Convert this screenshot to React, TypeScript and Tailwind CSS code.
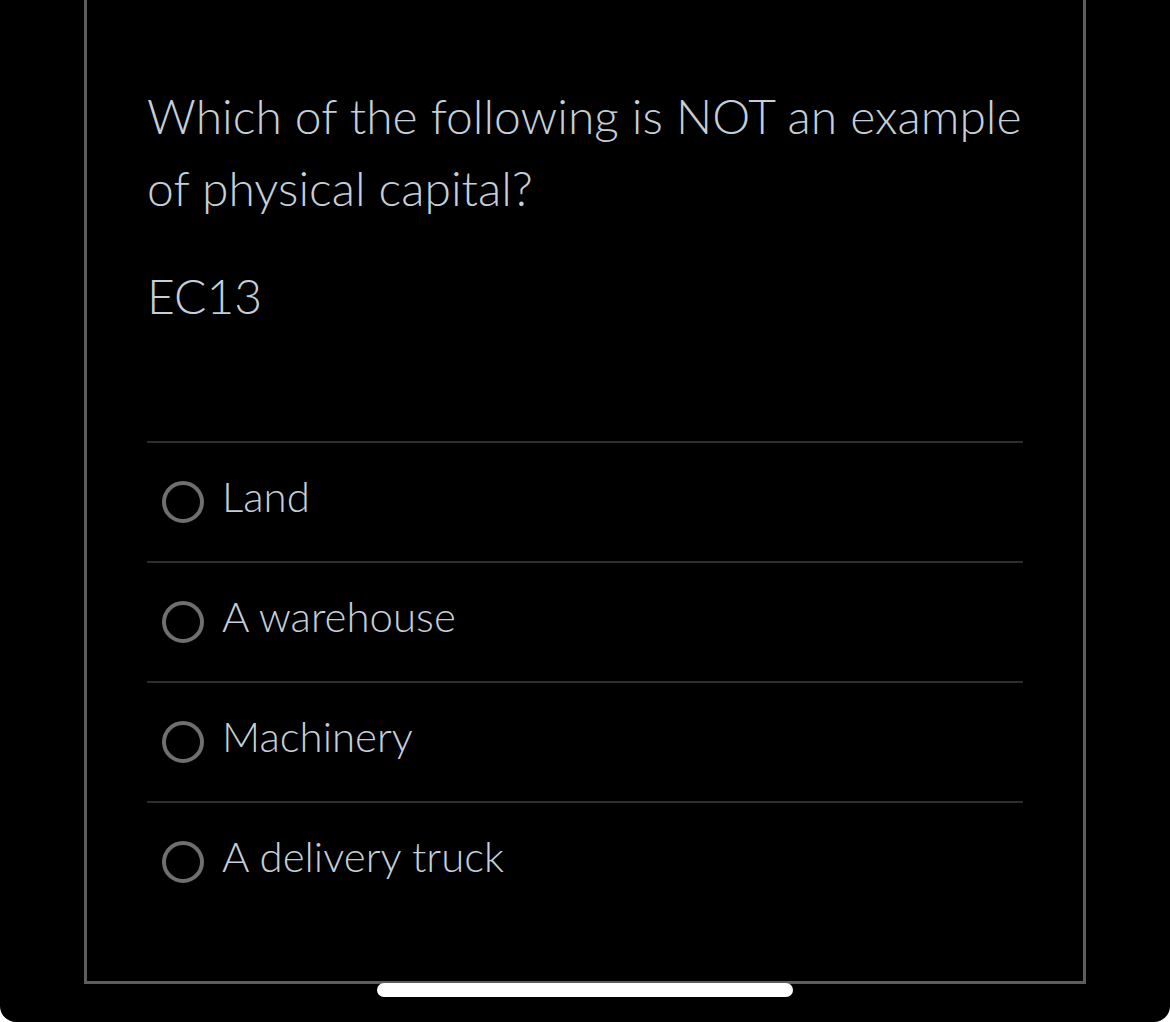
const options = ["Land", "A warehouse", "Machinery", "A delivery truck"];

const RadioCircle = () => (
  <span className="block w-[42px] h-[42px] shrink-0 rounded-full border-[4px] border-[#6f6f6f]" />
);

export default function App() {
  return (
    <div className="w-full h-[1022px] bg-white" style={{ fontFamily: "Lato, 'Liberation Sans', sans-serif" }}>
      <div className="relative h-full bg-black rounded-b-[16px] overflow-hidden">
        <div className="ml-[84px] w-[1002px] h-[984px] border-x-[3px] border-b-[3px] border-[#5d5d5d] px-[60px] pt-[80px]">
          <h1 className="text-[48px] leading-[72px] font-light text-[#c4cfd9]">
            Which of the following is NOT an example of physical capital?
          </h1>
          <p className="mt-[36px] text-[48px] leading-[72px] font-light text-[#c4cfd9]">EC13</p>

          <div className="mt-[109px]">
            {options.map((opt) => (
              <label
                key={opt}
                className="flex items-center h-[120px] border-t-2 border-[#2e2e2e] pl-[15px] gap-[18px]"
              >
                <RadioCircle />
                <span className="text-[42px] leading-[50px] font-light text-[#c4cfd9] -mt-[12px]">{opt}</span>
              </label>
            ))}
          </div>
        </div>

        <div className="absolute left-[377px] top-[983px] w-[416px] h-[14px] rounded-full bg-white" />
      </div>
    </div>
  );
}
